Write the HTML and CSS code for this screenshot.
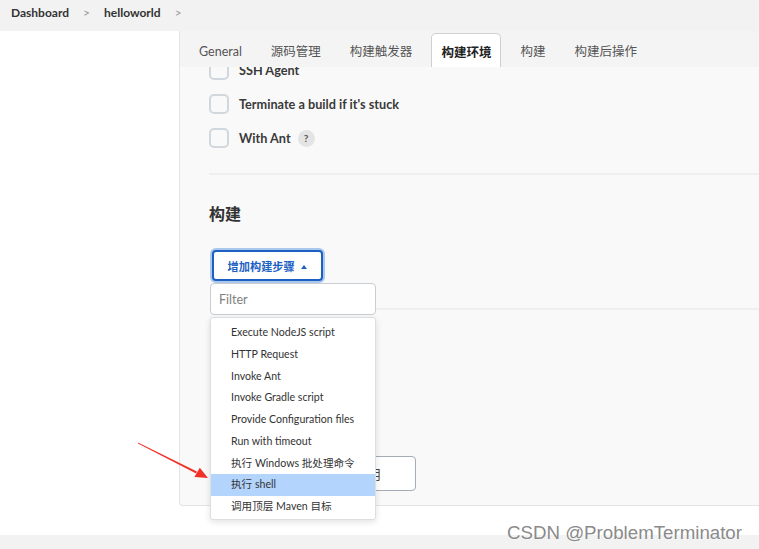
FILE: index.html
```html
<!DOCTYPE html>
<html lang="zh-CN">
<head>
    <meta charset="UTF-8">
    <title>helloworld Config [Jenkins]</title>
    <link rel="stylesheet" href="styles.css">
</head>
<body>
    <div class="breadcrumb">
        <span class="crumb">Dashboard</span>
        <span class="sep">&gt;</span>
        <span class="crumb">helloworld</span>
        <span class="sep">&gt;</span>
    </div>

    <div class="page">
        <div class="sidebar"></div>
        <div class="main">
            <div class="tabs">
                <span class="tab">General</span>
                <span class="tab">源码管理</span>
                <span class="tab">构建触发器</span>
                <span class="tab active">构建环境</span>
                <span class="tab">构建</span>
                <span class="tab">构建后操作</span>
            </div>

            <div class="content">
                <div class="scrolled">
                    <div class="options">
                        <label class="option"><span class="checkbox"></span>SSH Agent</label>
                        <label class="option"><span class="checkbox"></span>Terminate a build if it's stuck</label>
                        <label class="option"><span class="checkbox"></span>With Ant <span class="help">?</span></label>
                    </div>
                </div>

                <div class="section">
                    <h2>构建</h2>
                    <div class="add-step">
                        <button class="add-button">增加构建步骤 <span class="caret"></span></button>
                        <div class="popup">
                            <input class="filter" type="text" placeholder="Filter">
                            <ul class="menu">
                                <li>Execute NodeJS script</li>
                                <li>HTTP Request</li>
                                <li>Invoke Ant</li>
                                <li>Invoke Gradle script</li>
                                <li>Provide Configuration files</li>
                                <li>Run with timeout</li>
                                <li>执行 Windows 批处理命令</li>
                                <li class="selected">执行 shell</li>
                                <li>调用顶层 Maven 目标</li>
                            </ul>
                        </div>
                    </div>
                </div>

                <div class="bottom-bar">
                    <button class="btn primary">保存</button>
                    <button class="btn">应用</button>
                </div>
            </div>
        </div>
    </div>

    <div class="footer"></div>

    <svg class="arrow" width="90" height="55" viewBox="0 0 90 55">
        <polygon points="8,7.5 66.9,36.6 66.1,38.6 8,8.5" fill="#f2302a"/>
        <polygon points="78,43 64.4,42.1 69.8,32.7" fill="#f2302a"/>
    </svg>

    <div class="watermark">CSDN @ProblemTerminator</div>
</body>
</html>
```

FILE: styles.css
```css
body {
    margin: 0;
    font-family: 'Lato', 'Noto Sans CJK SC', sans-serif;
    color: #333;
    background-color: #fff;
    width: 759px;
    height: 549px;
    overflow: hidden;
    position: relative;
}

.breadcrumb {
    display: flex;
    align-items: flex-start;
    height: 31px;
    line-height: 25px;
    padding-left: 11px;
    background-color: #f2f2f2;
    font-size: 12px;
}

.crumb {
    font-weight: 700;
    color: #333;
}

.sep {
    color: #999;
    margin: 0 14px;
    font-size: 12px;
}

.page {
    display: flex;
    height: 504px;
}

.sidebar {
    width: 179px;
    background-color: #fff;
}

.main {
    flex: 1;
    height: 474px;
    display: flex;
    flex-direction: column;
    background-color: #f9f9f9;
    border-left: 1px solid #e2e4e6;
    border-bottom: 1px solid #e2e4e6;
    border-bottom-left-radius: 4px;
}

.tabs {
    display: flex;
    align-items: flex-end;
    gap: 9px;
    height: 36px;
    padding-left: 9px;
    background-color: #f4f4f4;
    flex-shrink: 0;
}

.tab {
    padding: 2px 10px 0;
    height: 34px;
    line-height: 34px;
    font-size: 12.5px;
    color: #555;
    box-sizing: border-box;
}

.tab.active {
    padding: 2px 9px 0;
    background-color: #fff;
    border: 1px solid #cdd0d3;
    border-bottom: none;
    border-radius: 5px 5px 0 0;
    font-weight: 700;
    color: #222;
    line-height: 33px;
}

.content {
    flex: 1;
    padding-left: 29px;
}

.scrolled {
    overflow: hidden;
    border-bottom: 2px solid #efefef;
}

.options {
    display: flex;
    flex-direction: column;
    gap: 14px;
    margin-top: -7px;
    padding-bottom: 25px;
}

.option {
    display: flex;
    align-items: center;
    height: 20px;
    font-size: 12.7px;
    font-weight: 700;
    color: #3a3a3a;
}

.checkbox {
    width: 20px;
    height: 20px;
    box-sizing: border-box;
    border: 2px solid #d0d7dd;
    border-radius: 5px;
    margin-right: 10px;
}

.help {
    display: inline-flex;
    align-items: center;
    justify-content: center;
    width: 17px;
    height: 17px;
    margin-left: 7px;
    border-radius: 50%;
    background-color: #e4e4e4;
    color: #555;
    font-size: 10px;
    font-weight: 700;
}

.section {
    padding-top: 28px;
    padding-bottom: 27px;
    border-bottom: 2px solid #efefef;
}

.section h2 {
    margin: 0 0 25px 0;
    font-size: 16px;
    line-height: 22px;
    font-weight: 700;
    color: #333;
}

.add-step {
    position: relative;
    padding-left: 3px;
}

.add-button {
    height: 31px;
    width: 111px;
    padding: 0;
    margin-top: 1px;
    border: 2px solid #1d5fc2;
    border-radius: 4px;
    box-shadow: 0 0 0 2px #a9c8ec;
    background-color: #fff;
    color: #1d5fc2;
    font-family: inherit;
    font-size: 11.2px;
    font-weight: 700;
    display: block;
}

.caret {
    display: inline-block;
    width: 0;
    height: 0;
    margin-left: 4px;
    vertical-align: 2px;
    border-left: 3.5px solid transparent;
    border-right: 3.5px solid transparent;
    border-bottom: 4px solid #1d5fc2;
}

.popup {
    position: absolute;
    left: 1px;
    top: 33px;
    width: 166px;
    z-index: 5;
}

.filter {
    display: block;
    width: 166px;
    height: 32px;
    box-sizing: border-box;
    padding: 0 8px;
    border: 1.5px solid #c9ced3;
    border-radius: 4px;
    background-color: #fff;
    font-family: inherit;
    font-size: 12.5px;
    color: #333;
}

.filter::placeholder {
    color: #808080;
}

.menu {
    list-style: none;
    margin: 2px 0 0 0;
    padding: 4px 0 1px;
    background-color: #fff;
    border: 1px solid #dcdfe2;
    border-radius: 3px;
    box-shadow: 0 2px 6px rgba(0, 0, 0, 0.12);
}

.menu li {
    height: 21.75px;
    line-height: 21.75px;
    padding-left: 20px;
    font-size: 10.6px;
    color: #333;
}

.menu li.selected {
    background-color: #b3d4fc;
}

.bottom-bar {
    display: flex;
    gap: 10px;
    margin-top: 146px;
    padding-left: 3px;
}

.btn {
    height: 35px;
    width: 98px;
    padding: 0;
    border: 1.5px solid #a3adb7;
    border-radius: 4px;
    background-color: #fff;
    color: #444;
    font-family: inherit;
    font-size: 13px;
}

.btn + .btn {
    width: auto;
    padding: 0 34px;
}

.btn.primary {
    background-color: #1d5fc2;
    border-color: #1d5fc2;
    color: #fff;
}

.footer {
    height: 14px;
    background-color: #f2f2f2;
}

.arrow {
    position: absolute;
    left: 130px;
    top: 435px;
}

.watermark {
    position: absolute;
    left: 507px;
    top: 522px;
    font-family: 'Liberation Sans', Arial, sans-serif;
    font-size: 18.7px;
    color: #8a8a8a;
    text-shadow: 0 0 2px #fff;
}
```
